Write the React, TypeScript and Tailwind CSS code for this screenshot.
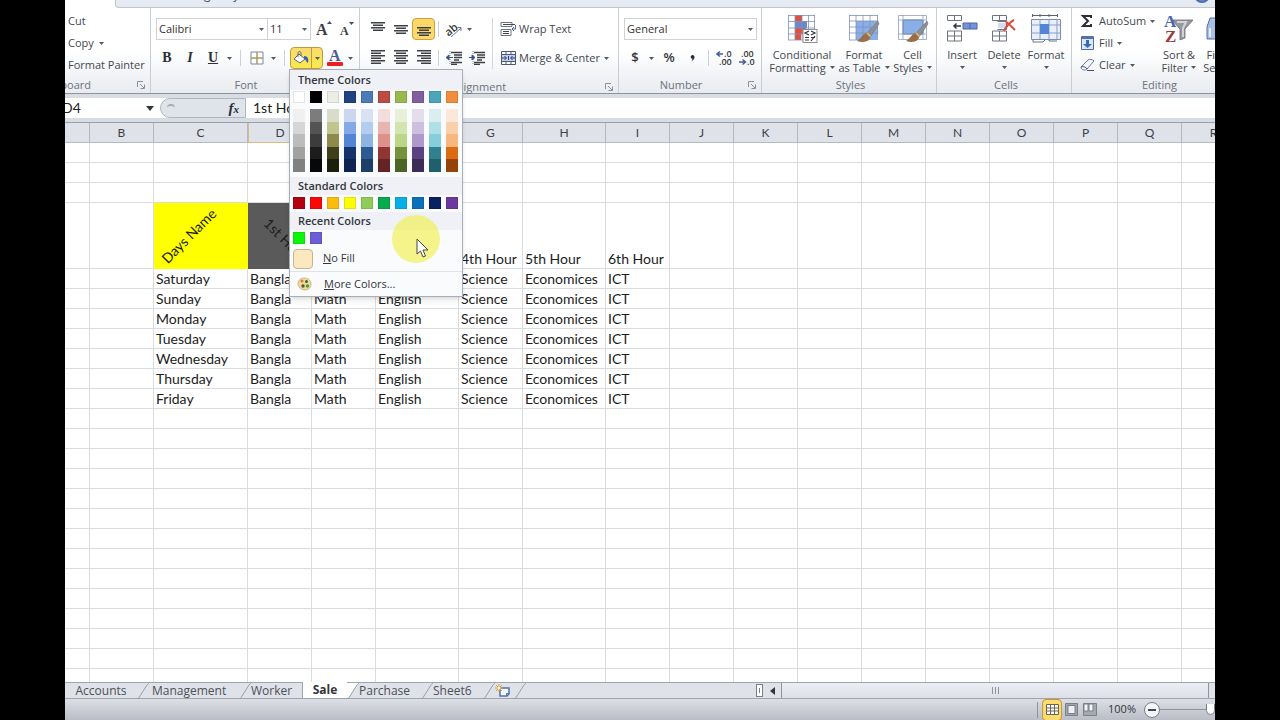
import { useState } from "react";
import type { ReactNode } from "react";

const columns = [
  { name: "", width: 25 },
  { name: "B", width: 64 },
  { name: "C", width: 94 },
  { name: "D", width: 64 },
  { name: "E", width: 64 },
  { name: "F", width: 83 },
  { name: "G", width: 64 },
  { name: "H", width: 83 },
  ...["I", "J", "K", "L", "M", "N", "O", "P", "Q", "R"].map((name) => ({ name, width: 64 })),
];

const subjects = ["Bangla", "Math", "English", "Science", "Economices", "ICT"];
const days = ["Saturday", "Sunday", "Monday", "Tuesday", "Wednesday", "Thursday", "Friday"];
const hours = ["2nd Hour", "3rd Hour", "4th Hour", "5th Hour", "6th Hour"];

const themeColors = [
  { base: "#ffffff", shades: ["#f0f0f0", "#d6d6d6", "#bcbcbc", "#a2a2a2", "#808080"] },
  { base: "#000000", shades: ["#7c7c7c", "#545454", "#3c3c3c", "#1c1c1c", "#080808"] },
  { base: "#eceee6", shades: ["#d9dcc8", "#c0c58e", "#8c8a4c", "#3f4019", "#1c1f0c"] },
  { base: "#20427e", shades: ["#ccd6ee", "#84a9e6", "#5484d4", "#14346c", "#0e2450"] },
  { base: "#4a7ab8", shades: ["#d8e2f2", "#b2cdee", "#8fb4e2", "#2c5a92", "#1e3e68"] },
  { base: "#bc4c42", shades: ["#f2dcdc", "#e8b4b0", "#de908a", "#903434", "#642424"] },
  { base: "#98b850", shades: ["#e9f0d8", "#d4e4b0", "#bcd688", "#74923a", "#4c6426"] },
  { base: "#80609e", shades: ["#e4deec", "#ccc0dc", "#ae9aca", "#5a4280", "#3c2c58"] },
  { base: "#4aa6b8", shades: ["#daeef2", "#aee0e6", "#86cfda", "#32808e", "#20606a"] },
  { base: "#f28c3e", shades: ["#fce8da", "#fad0ac", "#f8b680", "#dc6a10", "#944408"] },
];
const standardColors = ["#b40010", "#fa0808", "#fcbc0c", "#fcfc08", "#92cc58", "#08aa50", "#08aee8", "#0c70bc", "#0a2060", "#6c38a0"];
const recentColors = ["#0cf60c", "#6c5cd6"];

function Caret() {
  return (
    <svg className="shrink-0" width="5" height="3" viewBox="0 0 5 3" aria-hidden="true">
      <path d="M0 0h5L2.500 3z" fill="#555a62" />
    </svg>
  );
}

function Separator() {
  return <span className="mx-[5px] h-4 w-px shrink-0 bg-[#ccd0d7]" />;
}

function IconButton({ label, className = "w-[22px]", children }: { label: string; className?: string; children: ReactNode }) {
  return (
    <button type="button" aria-label={label} className={`flex h-[22px] shrink-0 items-center justify-center ${className}`}>
      {children}
    </button>
  );
}

function Group({ label, className, launcher, children }: { label: string; className: string; launcher?: boolean; children: ReactNode }) {
  return (
    <section aria-label={label} className={`flex shrink-0 flex-col border-r border-[#c9cdd4] ${className}`}>
      <div className="flex flex-1">{children}</div>
      <div className={`relative flex h-4 items-center justify-center text-[#6c717a] ${launcher ? "pr-[18px]" : ""}`}>
        {label}
        {launcher && (
          <svg className="absolute right-[5px] top-1" width="8" height="8" viewBox="0 0 8 8" aria-hidden="true">
            <path d="M.5 6V.5H6M3 3l4 4M7.500 3.500v4h-4" fill="none" stroke="#8a8f98" />
          </svg>
        )}
      </div>
    </section>
  );
}

function Combo({ label, value, className }: { label: string; value: string; className: string }) {
  return (
    <label className={`relative flex h-[22px] shrink-0 items-center ${className}`}>
      <select aria-label={label} className="h-full w-full appearance-none border border-[#cfd2d8] bg-white px-[2px] text-[#333]">
        <option>{value}</option>
      </select>
      <span className="pointer-events-none absolute right-1">
        <Caret />
      </span>
    </label>
  );
}

// text lines, each given as [x, length]
function Lines({ rows, top = 0 }: { rows: number[][]; top?: number }) {
  return (
    <svg width="16" height="16" viewBox="0 0 16 16" aria-hidden="true">
      {rows.map(([x, w], i) => (
        <rect key={i} x={x} y={top + i * 2.5} width={w} height="1.500" fill="#3c3f45" />
      ))}
    </svg>
  );
}

function Indent({ flip }: { flip?: boolean }) {
  return (
    <svg width="16" height="14" viewBox="0 0 16 14" aria-hidden="true">
      <path d="M5 1.500h11M8 4h8M8 6.500h8M8 9h5M5 11.500h11M5 13.500h6" stroke="#3c3f45" strokeWidth="1.500" />
      <path d="M4 0v14" stroke="#7a869e" strokeDasharray="1 1" />
      <path d={flip ? "M0 6.500h3M3 4l3 2.500L3 9z" : "M7 6.500H3M3 4L0 6.500 3 9z"} stroke="#3a5490" fill="#3a5490" />
    </svg>
  );
}

function Decimals({ less }: { less?: boolean }) {
  return (
    <svg width="18" height="16" viewBox="0 0 18 16" aria-hidden="true">
      <g fontFamily="Open Sans, sans-serif" fontSize="9" fontWeight="600" fill="#33363c">
        <text x={less ? 3 : 8} y="7">{less ? ".00" : ".0"}</text>
        <text x={less ? 9 : 3} y="15">{less ? ".0" : ".00"}</text>
      </g>
      <path d={less ? "M1 12h6M4.500 9.500L7.500 12l-3 2.500" : "M7 4H1M4 1.500L1 4l3 2.500"} fill="none" stroke="#4a5c98" strokeWidth="1.500" />
    </svg>
  );
}

function BigButton({ icon, lines, className }: { icon: ReactNode; lines: string[]; className: string }) {
  return (
    <button type="button" className={`flex shrink-0 flex-col items-center pt-[5px] leading-[13px] text-[#44484f] ${className}`}>
      <span className="mb-1 flex h-[31px] items-center">{icon}</span>
      <span className="whitespace-nowrap">{lines[0]}</span>
      <span className="flex h-[13px] items-center gap-1 whitespace-nowrap">
        {lines[1]}
        <Caret />
      </span>
    </button>
  );
}

function Brush() {
  return (
    <g>
      <path d="M30 7L19 19l3.500 3.500L31 10z" fill="#8d8f94" stroke="#6a6d74" strokeWidth=".5" />
      <path d="M19 19c-4 0-4 4-10 8 6 2 12 1 13.500-4.500z" fill="#9a6f48" />
      <path d="M19 19l3.500 3.500" stroke="#e8c060" strokeWidth="1.500" />
    </g>
  );
}

function ConditionalIcon() {
  return (
    <svg width="32" height="30" viewBox="0 0 32 30" aria-hidden="true">
      <rect x="2" y="1" width="27" height="25" fill="#fff" />
      <path d="M9 1h7v6H9zM9 14h11v6H9zM9 20h6v6H9z" fill="#e0503c" />
      <path d="M9 7h12v7H9z" fill="#6b88cc" />
      <path d="M2 1.500h27M2 7.500h27M2 14h27M2 20h27M2 26h20M2.500 1v25M9 1v25M16 1v25M22.500 1v25M28.500 1v20" stroke="#7d92bd" fill="none" strokeWidth=".8" />
      <rect x="17" y="15.500" width="14" height="13" fill="#fff" stroke="#8a8f98" />
      <path d="M23 17l-4 2 4 2M19 23.500h4M19 26h4M25 17l4 2-4 2M25 23.500h4M25 27l4-5" fill="none" stroke="#33363c" strokeWidth="1.200" />
    </svg>
  );
}

function TableIcon() {
  return (
    <svg width="32" height="30" viewBox="0 0 32 30" aria-hidden="true">
      <rect x="1" y="1" width="29" height="25" fill="#fff" />
      <path d="M8 7h22v19H8z" fill="#8aaee6" />
      <path d="M1 1.500h29M1 7h29M1 13h29M1 19h29M1 26h20M1.500 1v25M8 1v25M15 1v25M22 1v25M29.500 1v20" stroke="#7d92bd" fill="none" strokeWidth=".8" />
      <Brush />
    </svg>
  );
}

function CellStylesIcon() {
  return (
    <svg width="32" height="30" viewBox="0 0 32 30" aria-hidden="true">
      <path d="M1.500 1.500h28v24h-28z" fill="#fff" stroke="#8d9fc4" strokeWidth=".8" />
      <path d="M6 6h20v14H6z" fill="#8aaee6" stroke="#5877b8" />
      <path d="M1 6h28M1 20h28M6 1v24M26 1v24" stroke="#8d9fc4" strokeWidth=".8" />
      <Brush />
    </svg>
  );
}

function InsertIcon() {
  return (
    <svg width="32" height="30" viewBox="0 0 32 30" aria-hidden="true">
      <path d="M1.500 1.500h14v5h-14zM8.500 1.500v5M1.500 17h14v10h-14zM8.500 17v10M1.500 22h14" fill="#fff" stroke="#6d7480" />
      <path d="M17 9h14v6H17zM24 9v6" fill="#7394d8" stroke="#4a65a8" />
      <path d="M15 12H8M10.500 9.500L8 12l2.500 2.500" fill="none" stroke="#33363c" strokeWidth="1.500" />
    </svg>
  );
}

function DeleteIcon() {
  return (
    <svg width="32" height="30" viewBox="0 0 32 30" aria-hidden="true">
      <path d="M4.500 1.500h14v5h-14zM11.500 1.500v5M4.500 17h14v10h-14zM11.500 17v10M4.500 22h14M9.500 7.500h9v8h-9" fill="#fff" stroke="#6d7480" />
      <path d="M10 9h8v5h-8z" fill="#cfdcf2" />
      <path d="M17 7c3 2 7 6 10 9M26 6c-4 2-8 7-10 11" fill="none" stroke="#de4a3a" strokeWidth="2" />
    </svg>
  );
}

function FormatIcon() {
  return (
    <svg width="32" height="30" viewBox="0 0 32 30" aria-hidden="true">
      <path d="M2 1.500h26M2.500 0v3M10 0v3M19 0v3M27.500 0v3" stroke="#5c626c" />
      <path d="M1.500 5.500h29v20h-29z" fill="#e8eefa" stroke="#7a8cb0" />
      <path d="M10 5v20M19 5v20M1 11h29M1 19h29M27 5v20" stroke="#8d9fc4" />
      <path d="M10 10h9v10h-9z" fill="#5484d8" />
      <path d="M3 26v2h10l2-2M19 26v1h8" fill="none" stroke="#6d7480" />
    </svg>
  );
}

function SortIcon() {
  return (
    <svg width="32" height="30" viewBox="0 0 32 30" aria-hidden="true">
      <path d="M9 6h21l-8 9v9l-5 2V15z" fill="#96999f" stroke="#6d7076" strokeWidth=".8" />
      <path d="M14 8h9l-3 6v9" fill="none" stroke="#d2d4d8" strokeWidth="2" />
      <g fontFamily="Liberation Serif, serif" fontSize="17" fontWeight="700">
        <text x="1" y="13" fill="#4a65b0">A</text>
        <text x="2" y="28" fill="#a03a40">Z</text>
      </g>
    </svg>
  );
}

function FindIcon() {
  return (
    <svg width="34" height="30" viewBox="0 0 34 30" aria-hidden="true">
      <path d="M1 13l3-9h6l3 9v12H1zM20 13l3-9h6l3 9v12H20zM13 13h7v6h-7z" fill="#a9bfe6" stroke="#5470ac" />
      <path d="M4 14v9M23 14v9" stroke="#e6eefc" strokeWidth="2" />
    </svg>
  );
}

function Swatch({ color }: { color: string }) {
  return <button type="button" aria-label={color} className="h-3 w-3 border border-black/10" style={{ backgroundColor: color }} />;
}

function FillMenu() {
  return (
    <div className="absolute -left-px top-[22px] z-10 w-[174px] border border-[#a9adb5] bg-[#fafbfd] text-[#33363c] shadow-md">
      <h3 className="flex h-5 items-center bg-[#eff1f6] pl-2 font-semibold">Theme Colors</h3>
      <div className="flex gap-[5px] pl-[3px] pt-[1px]">
        {themeColors.map((c) => (
          <div key={c.base} className="flex flex-col gap-[6px]">
            <Swatch color={c.base} />
            <div className="grid h-[63px] grid-rows-5">
              {c.shades.map((shade) => (
                <button key={shade} type="button" aria-label={shade} style={{ backgroundColor: shade }} />
              ))}
            </div>
          </div>
        ))}
      </div>
      <h3 className="mt-[5px] flex h-[18px] items-center bg-[#eff1f6] pl-2 font-semibold">Standard Colors</h3>
      <div className="flex gap-[5px] py-[2px] pl-[3px]">
        {standardColors.map((c) => (
          <Swatch key={c} color={c} />
        ))}
      </div>
      <h3 className="mt-[1px] flex h-[18px] items-center bg-[#eff1f6] pl-2 font-semibold">Recent Colors</h3>
      <div className="flex gap-[5px] py-[2px] pl-[3px]">
        {recentColors.map((c) => (
          <Swatch key={c} color={c} />
        ))}
      </div>
      <button type="button" className="flex h-[26px] w-full items-center gap-[10px] border-b border-[#dfe2e7] pl-[3px]">
        <span className="h-5 w-5 rounded-sm border border-[#c8b48a] bg-[#fbe8bf]" />
        <span><u>N</u>o Fill</span>
      </button>
      <button type="button" className="flex h-6 w-full items-center gap-3 pl-[7px]">
        <svg width="15" height="14" viewBox="0 0 15 14" aria-hidden="true">
          <path d="M7 1C3 1 .5 4 1 7.500S5 13 8 13s6-2 6-6-3-6-7-6z" fill="#ecdca0" stroke="#c0a868" strokeWidth=".7" />
          <circle cx="5" cy="4" r="1.500" fill="#e2743c" />
          <circle cx="9.500" cy="4.500" r="1.500" fill="#3c6434" />
          <circle cx="6" cy="9" r="1.700" fill="#6e4a30" />
          <circle cx="10.500" cy="9" r="1.700" fill="#4c9a44" />
        </svg>
        <span><u>M</u>ore Colors...</span>
      </button>
      <span className="pointer-events-none absolute left-[102px] top-[145px] h-12 w-12 rounded-full bg-[#f0f040]/60" />
      <svg className="pointer-events-none absolute left-[126px] top-[168px]" width="13" height="20" viewBox="0 0 13 20" aria-hidden="true">
        <path d="M1 1v15l3.500-3 2.500 6 2.500-1L7 12h5z" fill="#fff" stroke="#4a4640" />
      </svg>
    </div>
  );
}

function Ribbon() {
  const [fillOpen, setFillOpen] = useState(true);

  return (
    <div className="relative z-10 flex h-[86px] shrink-0 border-b border-[#8f949c] bg-linear-to-b from-white from-50% to-[#e8ebf0]">
      <section aria-label="Clipboard" className="flex w-[86px] shrink-0 flex-col border-r border-[#c9cdd4]">
        <div className="flex flex-1 flex-col items-start pl-[3px] pt-[2px] text-[#44484f]">
          <button type="button" className="h-[22px]">Cut</button>
          <button type="button" className="flex h-[22px] items-center gap-[5px]">Copy <Caret /></button>
          <button type="button" className="h-[22px] whitespace-nowrap">Format Painter</button>
        </div>
        <div className="relative h-4">
          <div className="flex h-4 w-[26px] items-center justify-end overflow-hidden text-[#6c717a]">Clipboard</div>
          <svg className="absolute right-[5px] top-1" width="8" height="8" viewBox="0 0 8 8" aria-hidden="true">
            <path d="M.5 6V.5H6M3 3l4 4M7.500 3.500v4h-4" fill="none" stroke="#8a8f98" />
          </svg>
        </div>
      </section>

      <Group label="Font" className="w-[209px]" launcher>
        <div className="flex flex-col gap-[7px] pl-[5px] pt-[10px]">
          <div className="flex">
            <Combo label="Font name" value="Calibri" className="w-28" />
            <Combo label="Font size" value="11" className="-ml-px w-11" />
            <IconButton label="Grow font" className="w-[25px]">
              <svg width="18" height="18" viewBox="0 0 18 18" aria-hidden="true">
                <text x="1" y="15" fontFamily="Liberation Serif, serif" fontSize="16" fontWeight="700" fill="#3c3f45">A</text>
                <path d="M12 4l2.500-3L17 4z" fill="#3c5080" />
              </svg>
            </IconButton>
            <IconButton label="Shrink font">
              <svg width="18" height="18" viewBox="0 0 18 18" aria-hidden="true">
                <text x="2" y="15" fontFamily="Liberation Serif, serif" fontSize="12" fontWeight="700" fill="#3c3f45">A</text>
                <path d="M11 2h5l-2.500 3z" fill="#3c5080" />
              </svg>
            </IconButton>
          </div>
          <div className="flex items-center text-[#2c2e33]">
            <div className="flex font-serif text-sm font-bold" style={{ fontFamily: "'Liberation Serif', serif" }}>
              <IconButton label="Bold">B</IconButton>
              <IconButton label="Italic" className="w-6"><i>I</i></IconButton>
              <IconButton label="Underline"><u>U</u></IconButton>
            </div>
            <IconButton label="Underline style" className="w-[11px]"><Caret /></IconButton>
            <Separator />
            <IconButton label="Borders">
              <svg width="14" height="14" viewBox="0 0 14 14" aria-hidden="true">
                <path d="M1 1h12v12H1z" fill="#fff" stroke="#7c86a0" />
                <path d="M7 1v12M1 7h12" stroke="#a89a60" strokeWidth="1.500" />
              </svg>
            </IconButton>
            <IconButton label="Border style" className="w-[11px]"><Caret /></IconButton>
            <Separator />
            <div className="relative flex">
              <div className="flex rounded-sm border border-[#c09a40] bg-linear-to-b from-[#f8dc70] to-[#fce94a]">
                <button type="button" aria-label="Fill color" className="flex h-5 w-5 items-center justify-center">
                  <svg width="18" height="16" viewBox="0 0 18 16" aria-hidden="true">
                    <path d="M7 4l6 5-5 4-6-4z" fill="#fff" stroke="#5c6478" />
                    <path d="M6 7V3c0-2 3-2 3 0v3" fill="none" stroke="#5c6478" />
                    <path d="M12 6c4 0 5 3 4 7-2-1-2-3-4-5z" fill="#3f62a8" />
                  </svg>
                </button>
                <button
                  type="button"
                  aria-label="Fill color menu"
                  aria-expanded={fillOpen}
                  onClick={() => setFillOpen(!fillOpen)}
                  className="flex h-5 w-[11px] items-center justify-center border-l border-[#c09a40]"
                >
                  <Caret />
                </button>
              </div>
              {fillOpen && <FillMenu />}
            </div>
            <IconButton label="Font color" className="w-6">
              <svg width="16" height="18" viewBox="0 0 16 18" aria-hidden="true">
                <text x="2" y="12" fontFamily="Liberation Serif, serif" fontSize="16" fontWeight="700" fill="#4a5a90">A</text>
                <rect y="13" width="16" height="4" rx="1" fill="#ea2020" />
              </svg>
            </IconButton>
            <IconButton label="Font color menu" className="w-[7px]"><Caret /></IconButton>
          </div>
        </div>
      </Group>

      <Group label="Alignment" className="w-[259px]" launcher>
        <div className="flex w-[132px] flex-col gap-[7px] pl-[6px] pt-[10px]">
          <div className="flex items-center">
            <IconButton label="Top align" className="w-[23px]"><Lines top={1} rows={[[1, 14], [3, 10], [1, 14], [3, 10]]} /></IconButton>
            <IconButton label="Middle align" className="w-[23px]"><Lines top={4} rows={[[1, 14], [3, 10], [1, 14], [3, 10]]} /></IconButton>
            <IconButton label="Bottom align" className="w-[23px] rounded-sm border border-[#d0a040] bg-[#fbd868]">
              <Lines top={6} rows={[[1, 14], [3, 10], [1, 14], [3, 10]]} />
            </IconButton>
            <span className="mx-[3px] h-4 w-px bg-[#ccd0d7]" />
            <IconButton label="Orientation" className="w-8 gap-[3px]">
              <svg width="20" height="18" viewBox="0 0 20 18" aria-hidden="true">
                <text x="1" y="13" transform="rotate(-40 8 10)" fontFamily="Open Sans, sans-serif" fontSize="11" fontWeight="600" fill="#33363c">ab</text>
                <path d="M7 17L17 8M13.500 7.500H17V11" fill="none" stroke="#6d7480" />
              </svg>
              <Caret />
            </IconButton>
          </div>
          <div className="flex items-center">
            <IconButton label="Align left" className="w-[23px]"><Lines rows={[[1, 14], [1, 10], [1, 14], [1, 10], [1, 14], [1, 10]]} /></IconButton>
            <IconButton label="Center" className="w-[23px]"><Lines rows={[[1, 14], [3, 10], [1, 14], [3, 10], [1, 14], [3, 10]]} /></IconButton>
            <IconButton label="Align right" className="w-[23px]"><Lines rows={[[1, 14], [5, 10], [1, 14], [5, 10], [1, 14], [5, 10]]} /></IconButton>
            <span className="mx-[3px] h-4 w-px bg-[#ccd0d7]" />
            <IconButton label="Decrease indent" className="w-6"><Indent /></IconButton>
            <IconButton label="Increase indent"><Indent flip /></IconButton>
          </div>
        </div>
        <div className="my-[10px] flex flex-1 flex-col gap-[7px] border-l border-[#d4d7dd] pl-[7px] text-[#44484f]">
          <button type="button" className="flex h-[22px] items-center gap-[2px] whitespace-nowrap">
            <svg width="17" height="16" viewBox="0 0 17 16" aria-hidden="true">
              <path d="M1 1.500h11v4H1zM1 8.500h10v6H1z" fill="#fff" stroke="#6d7480" />
              <path d="M3 3.500h12M3 10.500h6M3 12.500h6" stroke="#44484f" />
              <path d="M15.500 4v4h-3M14 6l-2 2 2 2" fill="none" stroke="#4a65a8" />
            </svg>
            Wrap Text
          </button>
          <button type="button" className="flex h-[22px] items-center gap-[2px] whitespace-nowrap">
            <svg width="17" height="16" viewBox="0 0 17 16" aria-hidden="true">
              <path d="M1.500 1.500h14v13h-14z" fill="#fff" stroke="#4c5876" />
              <path d="M1 4.500h15M1 11.500h15M6 1v3M11 1v3M6 12v3M11 12v3" stroke="#4c5876" />
              <path d="M2 5h13v6H2z" fill="#c4d2ee" />
              <path d="M2 8h4M15 8h-4M4.500 6l2 2-2 2M12.500 6l-2 2 2 2M8.500 6v4" fill="none" stroke="#2c3c68" />
            </svg>
            Merge &amp; Center
            <span className="ml-[2px]"><Caret /></span>
          </button>
        </div>
      </Group>

      <Group label="Number" className="w-[143px]" launcher>
        <div className="flex flex-col gap-[7px] pl-[5px] pt-[10px]">
          <Combo label="Number format" value="General" className="w-[133px]" />
          <div className="flex items-center text-[13px] font-semibold text-[#33363c]">
            <IconButton label="Currency">$</IconButton>
            <IconButton label="Currency menu" className="w-[11px]"><Caret /></IconButton>
            <IconButton label="Percent" className="w-6">%</IconButton>
            <IconButton label="Comma style">
              <svg width="5" height="8" viewBox="0 0 5 8" aria-hidden="true">
                <path d="M2.500 1C4 1 4.500 2 4.500 3c0 2-1.500 3.500-3 4 .6-.8 1-1.500 1-2.200C1.500 4.800.7 4 .7 3S1.500 1 2.500 1z" fill="#2c2e33" />
              </svg>
            </IconButton>
            <Separator />
            <IconButton label="Increase decimal"><Decimals /></IconButton>
            <IconButton label="Decrease decimal"><Decimals less /></IconButton>
          </div>
        </div>
      </Group>

      <Group label="Styles" className="w-[175px] pl-[3px]">
        <BigButton icon={<ConditionalIcon />} lines={["Conditional", "Formatting"]} className="w-[74px]" />
        <BigButton icon={<TableIcon />} lines={["Format", "as Table"]} className="w-[50px]" />
        <BigButton icon={<CellStylesIcon />} lines={["Cell", "Styles"]} className="w-[47px]" />
      </Group>

      <Group label="Cells" className="w-[135px] pl-1">
        <BigButton icon={<InsertIcon />} lines={["Insert"]} className="w-[42px]" />
        <BigButton icon={<DeleteIcon />} lines={["Delete"]} className="w-[42px]" />
        <BigButton icon={<FormatIcon />} lines={["Format"]} className="w-[42px]" />
      </Group>

      <Group label="Editing" className="w-[176px]">
        <div className="flex w-[88px] flex-col items-start pl-2 pt-[2px] text-[#44484f]">
          <button type="button" className="flex h-[22px] items-center gap-1">
            <svg width="15" height="16" viewBox="0 0 15 16" aria-hidden="true">
              <path d="M11 5V3H3l5 5-5 5h8v-2" fill="none" stroke="#2c2e33" strokeWidth="2" />
            </svg>
            AutoSum
            <Caret />
          </button>
          <button type="button" className="flex h-[22px] items-center gap-1">
            <svg width="15" height="16" viewBox="0 0 15 16" aria-hidden="true">
              <path d="M1.500 1.500h12v13h-12z" fill="#dce8fa" stroke="#5470a8" />
              <path d="M1 3h13" stroke="#5470a8" strokeWidth="2" />
              <path d="M6 5h3v4h3l-4.500 4L3 9h3z" fill="#3868b8" />
            </svg>
            Fill
            <Caret />
          </button>
          <button type="button" className="flex h-[22px] items-center gap-1">
            <svg width="15" height="14" viewBox="0 0 15 14" aria-hidden="true">
              <path d="M1 9l7-7c1-1 5-1 6 1l-7 8c-2 2-6 1-6-2z" fill="#f4f6fb" stroke="#6878a0" />
              <path d="M1 9c2-1 5 0 6 2M7 12.500h7" fill="none" stroke="#44506e" />
            </svg>
            Clear
            <Caret />
          </button>
        </div>
        <BigButton icon={<SortIcon />} lines={["Sort &", "Filter"]} className="w-10" />
        <BigButton icon={<FindIcon />} lines={["Find &", "Select"]} className="w-12" />
      </Group>
    </div>
  );
}

function FormulaBar() {
  return (
    <div className="flex h-[29px] shrink-0 border-b border-[#9a9fa8] bg-[#d8dce3] pb-1 pt-1">
      <div className="flex w-[92px] items-center justify-between bg-white pr-[3px]">
        <input aria-label="Name box" defaultValue="D4" className="-ml-[3px] w-10 bg-transparent font-['Lato',sans-serif] text-sm text-[#222]" />
        <svg width="8" height="5" viewBox="0 0 8 5" aria-hidden="true">
          <path d="M0 0h8L4 5z" fill="#33363c" />
        </svg>
      </div>
      <div className="flex flex-1 bg-white">
        <div className="ml-[3px] flex w-[86px] shrink-0 items-center justify-between rounded-l-full border border-[#b0b5be] bg-[#dfe3ea] px-[6px]">
          <span className="h-2 w-2 rounded-full border-t-2 border-[#a4a9b2]" />
          <button type="button" aria-label="Insert function" className="font-['Liberation_Serif',serif] text-[15px] font-bold italic text-[#2c2e33]">
            f<span className="text-[11px]">x</span>
          </button>
        </div>
        <input aria-label="Formula" defaultValue="1st Hour" className="w-full min-w-0 bg-white pl-[7px] font-['Lato',sans-serif] text-sm text-[#222]" />
      </div>
    </div>
  );
}

function Sheet() {
  const cell = "border-b border-r border-[#dadce0] p-0 pl-[2px]";
  const blanks = (count: number) => Array.from({ length: count }, (_, i) => <td key={`blank-${i}`} className={cell} />);

  return (
    <div className="min-h-0 flex-1 overflow-hidden bg-white">
      <table className="w-[1181px] table-fixed border-separate border-spacing-0 whitespace-nowrap text-left font-['Lato',sans-serif] text-sm leading-4 text-[#1c1c1c]">
        <colgroup>
          {columns.map((c, i) => (
            <col key={i} style={{ width: c.width }} />
          ))}
        </colgroup>
        <thead>
          <tr className="h-5 bg-[#dfe2e8] text-xs text-[#3c4048]">
            {columns.map((c, i) => (
              <th
                key={i}
                className={`border-b border-r p-0 text-center font-normal ${c.name === "D" ? "border-l border-[#d8bc80]" : "border-[#b4b9c2]"}`}
              >
                {c.name}
              </th>
            ))}
          </tr>
        </thead>
        <tbody>
          {[1, 2, 3].map((row) => (
            <tr key={row} className="h-5">{blanks(columns.length)}</tr>
          ))}
          <tr className="h-[66px] align-bottom">
            {blanks(2)}
            <td className="bg-[#ffff00] p-0 pr-6 align-middle">
              <span className="flex -rotate-45 items-center justify-center">Days Name</span>
            </td>
            <td className="border-r border-[#dadce0] bg-[#5a5a5a] p-0 pl-3 pt-2 align-middle">
              <span className="flex rotate-45 items-center justify-center">1st Hour</span>
            </td>
            {hours.map((hour) => (
              <td key={hour} className={`${cell} pb-[1px]`}>{hour}</td>
            ))}
            {blanks(9)}
          </tr>
          {days.map((day) => (
            <tr key={day} className="h-5">
              {blanks(2)}
              <td className={cell}>{day}</td>
              {subjects.map((subject) => (
                <td key={subject} className={cell}>{subject}</td>
              ))}
              {blanks(9)}
            </tr>
          ))}
          {Array.from({ length: 14 }, (_, i) => (
            <tr key={i} className="h-5">{blanks(columns.length)}</tr>
          ))}
        </tbody>
      </table>
    </div>
  );
}

function Slant({ active }: { active?: boolean }) {
  return (
    <svg className="shrink-0" width="12" height="16" viewBox="0 0 12 16" aria-hidden="true">
      {active && <path d="M0 0h12L2 14l-2 2z" fill="#fff" />}
      <path d="M0 15.500c2 0 2-1 3-2.500L10 2c1-1 1-1.500 2-1.500" fill="none" stroke="#9a9fa8" />
    </svg>
  );
}

function SheetTabs() {
  return (
    <div className="flex h-[17px] shrink-0 border-b border-t border-[#a0a4ad] bg-[#dfe2e8] text-xs leading-4 text-[#4c5058]">
      <button type="button" className="w-[72px] shrink-0">Accounts</button>
      <Slant />
      <button type="button" className="w-[90px] shrink-0 pl-[3px] text-left">Management</button>
      <Slant />
      <button type="button" className="w-[52px] shrink-0 border-r border-[#a0a4ad] text-left">Worker</button>
      <button type="button" className="-mt-px w-11 shrink-0 bg-white font-bold text-[#33363c]">Sale</button>
      <Slant active />
      <button type="button" className="w-[62px] shrink-0 text-left">Parchase</button>
      <Slant />
      <button type="button" className="w-[50px] shrink-0 text-left">Sheet6</button>
      <Slant />
      <button type="button" aria-label="Insert worksheet" className="flex w-[19px] shrink-0 items-center">
        <svg width="16" height="14" viewBox="0 0 16 14" aria-hidden="true">
          <path d="M5 4h9v6l-2 2H5z" fill="#f4f7fc" stroke="#5470ac" strokeWidth="1.500" />
          <path d="M11.500 12V9.500H14" fill="none" stroke="#5470ac" />
          <path d="M4 0v8M0 4h8M1 1l6 6M7 1L1 7" stroke="#d89a40" />
          <circle cx="4" cy="4" r="1.500" fill="#fff4c0" />
        </svg>
      </button>
      <Slant />
      <div className="flex-1" />
      <span className="my-[1px] flex w-[7px] shrink-0 justify-center border border-[#7a7f88] bg-white py-[3px]">
        <span className="w-px bg-[#7a7f88]" />
      </span>
      <button type="button" aria-label="Scroll left" className="flex w-[18px] shrink-0 items-center justify-center">
        <svg width="5" height="8" viewBox="0 0 5 8" aria-hidden="true"><path d="M5 0v8L0 4z" fill="#33363c" /></svg>
      </button>
      <div className="flex w-[428px] shrink-0 items-center justify-center gap-[2px] border-x border-[#8f949c] bg-linear-to-b from-[#eceef5] to-[#dcdfe9]">
        <span className="h-[7px] w-px bg-[#8f949c]" />
        <span className="h-[7px] w-px bg-[#8f949c]" />
        <span className="h-[7px] w-px bg-[#8f949c]" />
      </div>
      <div className="w-[6px] shrink-0" />
    </div>
  );
}

function StatusBar() {
  return (
    <div className="flex h-[21px] shrink-0 items-center justify-end bg-linear-to-b from-[#dcdfe5] to-[#babdc5] text-[#33363c]">
      <span className="mr-1 h-4 w-px bg-[#8f949c]" />
      <IconButton label="Normal view" className="w-5 rounded-sm border border-[#c09a40] bg-[#fbdc6c]">
        <svg width="13" height="11" viewBox="0 0 13 11" aria-hidden="true">
          <path d="M.5.5h12v10H.5zM4.500.5v10M8.500.5v10M.5 4h12M.5 7h12" fill="#fff" stroke="#6b6450" />
        </svg>
      </IconButton>
      <IconButton label="Page layout view" className="w-[18px]">
        <svg width="13" height="13" viewBox="0 0 13 13" aria-hidden="true">
          <path d="M.5.5h12v12H.5z" fill="#9fa4ac" stroke="#7a7f88" />
          <path d="M3 2.500h7v8H3z" fill="#eef0f4" stroke="#7a7f88" />
        </svg>
      </IconButton>
      <IconButton label="Page break preview" className="w-5">
        <svg width="14" height="13" viewBox="0 0 14 13" aria-hidden="true">
          <path d="M.5.5h13v12H.5z" fill="#a4a9b1" stroke="#7a7f88" />
          <path d="M1 1h4v7H1zM6 1h4v7H6z" fill="#f4f5f8" stroke="#7a7f88" />
        </svg>
      </IconButton>
      <button type="button" className="w-11">100%</button>
      <button type="button" aria-label="Zoom out" className="flex h-4 w-4 shrink-0 items-center justify-center rounded-full border border-[#7a7f88] bg-[#f4f5f8]">
        <span className="h-[2px] w-2 bg-[#44484f]" />
      </button>
      <div className="flex w-[55px] overflow-hidden">
        <input
          type="range"
          aria-label="Zoom"
          defaultValue={50}
          className="h-3 w-[100px] shrink-0 appearance-none bg-transparent [&::-webkit-slider-runnable-track]:h-px [&::-webkit-slider-runnable-track]:bg-[#8f949c] [&::-webkit-slider-thumb]:-mt-[6px] [&::-webkit-slider-thumb]:h-3 [&::-webkit-slider-thumb]:w-[9px] [&::-webkit-slider-thumb]:appearance-none [&::-webkit-slider-thumb]:rounded-b-full [&::-webkit-slider-thumb]:border [&::-webkit-slider-thumb]:border-[#7a7f88] [&::-webkit-slider-thumb]:bg-white"
        />
      </div>
    </div>
  );
}

export default function App() {
  return (
    <div className="h-screen bg-black px-[65px] font-['Open_Sans','Noto_Sans',sans-serif] text-[11px]">
      <div className="flex h-full flex-col overflow-hidden bg-white">
        <nav className="flex h-2 shrink-0">
          <div className="w-[50px] shrink-0" />
          <div className="flex flex-1 items-end justify-between overflow-hidden rounded-bl-sm border-b border-l border-[#c0c5cd] bg-[#e6ebf3] pl-[74px] pr-[5px]">
            <a href="#layout" className="mb-1 text-xs leading-4 text-[#44484f]">Page Layout</a>
            <button type="button" aria-label="Help" className="mb-1 h-4 w-4 shrink-0 rounded-full border-2 border-[#4a6cb4] bg-[#6c8cd0]" />
          </div>
        </nav>
        <Ribbon />
        <FormulaBar />
        <Sheet />
        <SheetTabs />
        <StatusBar />
      </div>
    </div>
  );
}
